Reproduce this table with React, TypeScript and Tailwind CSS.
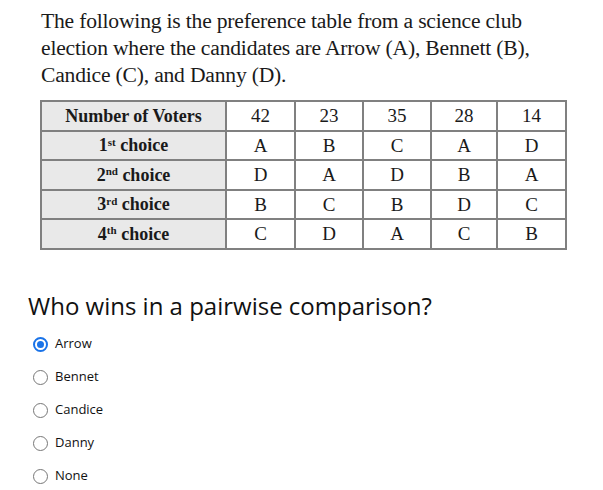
const rows = [
  { label: '1', sup: 'st', cells: ['A', 'B', 'C', 'A', 'D'] },
  { label: '2', sup: 'nd', cells: ['D', 'A', 'D', 'B', 'A'] },
  { label: '3', sup: 'rd', cells: ['B', 'C', 'B', 'D', 'C'] },
  { label: '4', sup: 'th', cells: ['C', 'D', 'A', 'C', 'B'] },
]

const voters = ['42', '23', '35', '28', '14']
const widths = ['w-[69px]', 'w-[68px]', 'w-[68px]', 'w-[66px]', 'w-[69px]']
const options = ['Arrow', 'Bennet', 'Candice', 'Danny', 'None']

const head = "w-[185px] border-2 border-[#808080] bg-[#e9e9e9] text-center font-['Liberation_Serif',serif] text-[18px] font-bold leading-none"
const cell = "border-2 border-[#808080] text-center font-['Liberation_Serif',serif] text-[19px] leading-none"

const App = () => {
  const selected = 'Arrow'

  return (
    <div className="w-[603px] h-[490px] bg-white overflow-hidden">
      {/* Problem text (serif, like the pasted image) */}
      <div className="pl-[41px] pt-[8px] font-['Liberation_Serif',serif] text-[21.6px] leading-[27px] text-[#1a1a1a] tracking-[-0.2px]">
        <p>The following is the preference table from a science club</p>
        <p>election where the candidates are Arrow (A), Bennett (B),</p>
        <p>Candice (C), and Danny (D).</p>
      </div>

      <table className="ml-[40px] mt-[11px] border-collapse text-[#1a1a1a]">
        <tbody>
          <tr className="h-[29.5px]">
            <td className={head}>Number of Voters</td>
            {voters.map((v, i) => (
              <td key={i} className={`${widths[i]} ${cell}`}>
                {v}
              </td>
            ))}
          </tr>
          {rows.map((r) => (
            <tr key={r.label} className="h-[29.5px]">
              <td className={head}>
                {r.label}
                <sup className="text-[11px] font-bold">{r.sup}</sup> choice
              </td>
              {r.cells.map((c, i) => (
                <td key={i} className={cell}>
                  {c}
                </td>
              ))}
            </tr>
          ))}
        </tbody>
      </table>

      <div className="font-['Open_Sans',sans-serif] text-[#111]">
        <h2 className="pl-[28px] mt-[40px] text-[24px] leading-[32px]">Who wins in a pairwise comparison?</h2>

        <div className="mt-[14px] pl-[33px] flex flex-col gap-[16px]">
          {options.map((o) => (
            <label key={o} className="flex items-center gap-[7px] h-[17px] text-[13px]">
              {o === selected ? (
                <span className="w-[15px] h-[15px] rounded-full border-2 border-[#1a73e8] flex items-center justify-center">
                  <span className="w-[7px] h-[7px] rounded-full bg-[#1a73e8]" />
                </span>
              ) : (
                <span className="w-[15px] h-[15px] rounded-full border border-[#777]" />
              )}
              <span>{o}</span>
            </label>
          ))}
        </div>
      </div>
    </div>
  )
}

export default App
